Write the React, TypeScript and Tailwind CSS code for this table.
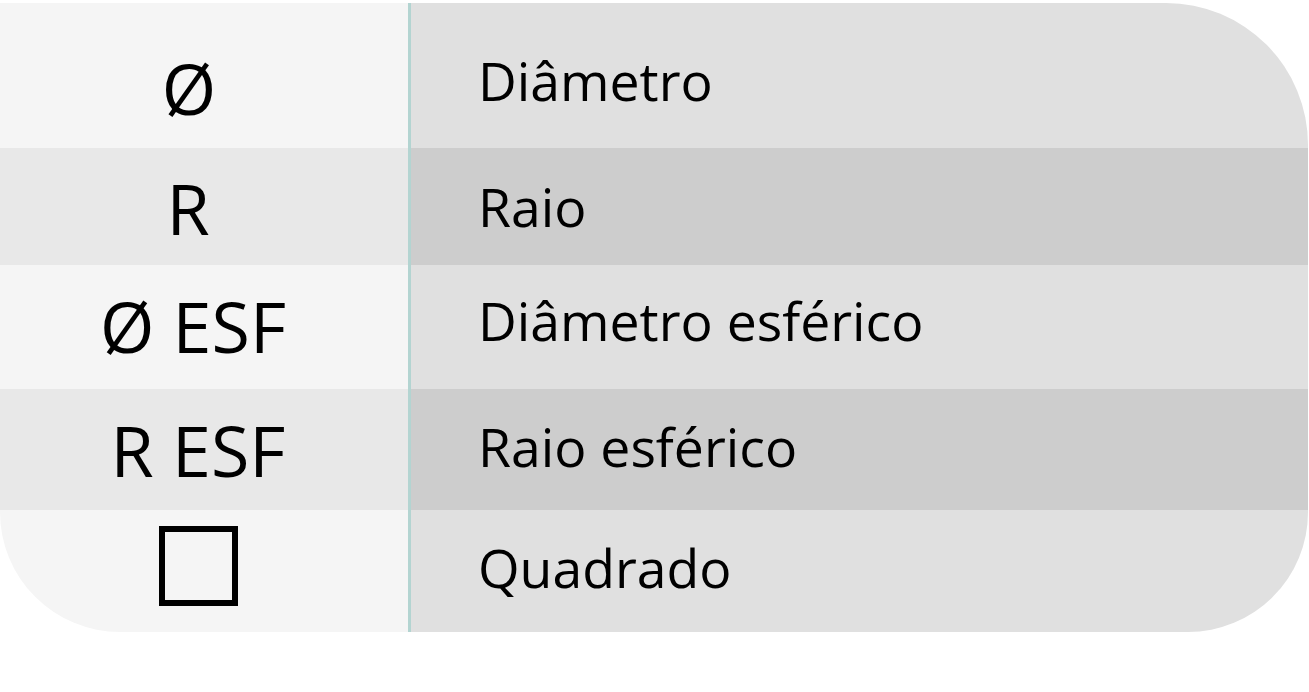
const rows = [
  { sym: "Ø", label: "Diâmetro", h: "h-[145px]", left: "bg-[#f5f5f5] pt-[25px] pr-[30px]", right: "bg-[#e0e0e0] pt-[10px]" },
  { sym: "R", label: "Raio", h: "h-[117px]", left: "bg-[#e8e8e8] pt-[3px] pr-[32px]", right: "bg-[#cdcdcd]" },
  { sym: "Ø ESF", label: "Diâmetro esférico", h: "h-[124px]", left: "bg-[#f5f5f5] pb-[2px] pr-[22px]", right: "bg-[#e0e0e0] pb-[13px]" },
  { sym: "R ESF", label: "Raio esférico", h: "h-[121px]", left: "bg-[#e8e8e8] pr-[12px]", right: "bg-[#cdcdcd] pb-[6px]" },
  { sym: null, label: "Quadrado", h: "h-[122px]", left: "bg-[#f5f5f5] pb-[10px] pr-[12px]", right: "bg-[#e0e0e0] pb-[7px]" },
];

export default function App() {
  return (
    <div className="w-[1309px] h-[692px] bg-white pt-[3px] font-['Open_Sans',sans-serif] text-black">
      <div className="w-[1308px] overflow-hidden rounded-tr-[142px] rounded-br-[120px] rounded-bl-[120px]">
        {rows.map((r) => (
          <div key={r.label} className={`flex ${r.h}`}>
            <div className={`w-[408px] flex items-center justify-center ${r.left}`}>
              {r.sym ? (
                <span className="text-[70px] leading-none">{r.sym}</span>
              ) : (
                <div className="w-[79px] h-[80px] border-[6px] border-black" />
              )}
            </div>
            <div className={`flex-1 flex items-center border-l-[3px] border-[#b3d4d1] pl-[67px] ${r.right}`}>
              <span className="text-[53.5px] leading-none">{r.label}</span>
            </div>
          </div>
        ))}
      </div>
    </div>
  );
}
